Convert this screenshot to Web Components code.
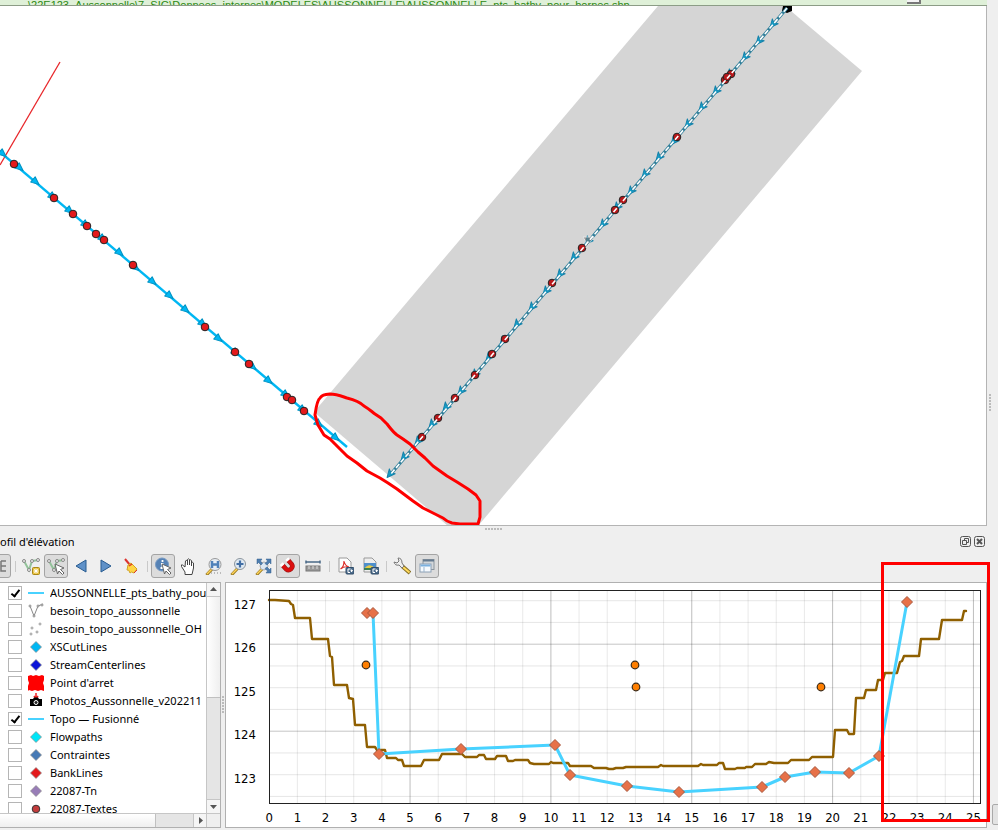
<!DOCTYPE html>
<html lang="fr">
<head>
<meta charset="utf-8">
<title>Profil d'élévation</title>
<style>
html, body { height: 100%; margin: 0; }
body { background: #efefef; color: #000; font: 11px/18px "Noto Sans", "Open Sans", sans-serif; overflow: hidden; }
</style>
</head>
<body>
<gis-app></gis-app>
<script>
function define(name, html, setup) {
  const template = document.createElement('template');
  template.innerHTML = html;
  customElements.define(name, class extends HTMLElement {
    constructor() {
      super();
      this.attachShadow({ mode: 'open' }).append(template.content.cloneNode(true));
    }
    connectedCallback() {
      if (setup && !this.ready) { this.ready = true; setup(this, this.shadowRoot); }
    }
  });
}

/* Message bar above the map */
define('message-bar', `
<style>
:host { display: flex; justify-content: space-between; align-items: flex-start; height: 5px; overflow: hidden; background: #dff0d8; border-bottom: 1px solid #8c9c86; color: #2b8a12; padding: 0 66px 0 28px; }
span { font: 11px/10px "Liberation Sans", sans-serif; white-space: nowrap; }
button { align-self: flex-end; width: 14px; height: 12px; margin: 0 0 1px; padding: 0; border: solid #777; border-width: 0 2px 2px 0; background: #f4f4f4; }
</style>
<span><slot></slot></span><button aria-label="Fermer le message"></button>`);

/* Map canvas */
const cutArrows = Array.from({ length: 21 }, (_, n) =>
  `<use href="#arrow" transform="translate(${Math.round(3 + 16.65 * n)} ${Math.round(154 + 14.2 * n)}) rotate(40)"/>`).join('');
const profileArrows = Array.from({ length: 28 }, (_, n) =>
  `<use href="#barb" transform="translate(${Math.round(773 - 14.2 * n)} ${Math.round(24 + 16.67 * n)}) rotate(130)"/>`).join('');
const dots = list => list.map(([x, y]) => `<circle cx="${x}" cy="${y}" r="3.8"/>`).join('');
const cutDots = dots([[14,164],[54,198],[73,214],[87,226],[96,234],[104,240],[133,265],[205,327],[235,352],[249,364],[287,397],[292,400],[304,411]]);
const profileDots = dots([[731,74],[725,80],[727,77],[677,137],[623,200],[615,210],[582,248],[552,283],[505,339],[492,354],[475,375],[455,398],[438,418],[422,437]]);
define('map-canvas', `
<style>
:host { display: block; overflow: hidden; background: #fff; border: solid #b4b4b4; border-width: 0 1px 1px 0; min-height: 0; }
svg { display: block; width: 100%; height: 100%; }
</style>
<svg viewBox="0 6 986 519" preserveAspectRatio="xMinYMin slice" role="img" aria-label="Carte">
<defs>
<path id="arrow" d="M4 0L-4 -3.500V3.500Z" fill="#00b7f3" stroke="#0092c2" stroke-linejoin="round"/>
<path id="barb" d="M4.500 0L-3.500 -3.800L-1.500 0L-3.500 3.800Z" fill="#159bc5" stroke="#1683aa" stroke-linejoin="round"/>
</defs>
<path d="M658 6H785L862 71L478 526H448L314 412Z" fill="#d5d5d5"/>
<path d="M60 62L0 165" stroke="#e8262a" stroke-width="1.3"/>
<path d="M0 152L347 447" stroke="#00b7f3" stroke-width="2.4"/>
${cutArrows}
<g fill="#e31a1c" stroke="#232323">${cutDots}</g>
<path d="M783 6H792V11L787 13L782 11Z"/>
<path d="M787 8L390 475" stroke="#32809b" stroke-width="3.2"/>
${profileArrows}
<g fill="#b8171a" stroke="#222">${profileDots}</g>
<path d="M594 237L583 237L586 242L586 248Z" fill="#777" stroke="#eee" stroke-linejoin="round" opacity=".65"/>
<path d="M787 8L390 475" stroke="#fff" stroke-width="1.6" stroke-dasharray="5 2.3"/>
<path d="M315 415C316 408 317 400 320 398C322 395 324 394.500 330 394C336 394 341 396 347 398C355 400 360 402 364 406C369 409 371 411 375 414L381 418L387 424C391 429 393 432 397 435L403 439L410 444L418 452L425 458L433 466L440 471L447 476L457 482L468 489L476 495L480 501V517L478 524H467L460 524L452 523Q446 521 443 518L433 513L423 508L413 501L405 495L397 489L388 483L380 478L367 471L357 463L347 456L337 446L330 439L324 435L318 425Z" fill="none" stroke="#fe0000" stroke-width="3" stroke-linejoin="round"/>
</svg>`);

/* Dotted splitter grip */
define('split-grip', `
<style>
:host { display: flex; align-items: center; justify-content: center; }
i { width: 18px; height: 3px; background: radial-gradient(circle at 1px 1px, #bbb 1px, transparent 1px) 0 0 / 3px 3px; }
:host([vertical]) i { width: 3px; height: 18px; }
</style><i></i>`);

/* Toolbar button */
const wand = '<path d="M9 11L2.500 18" stroke="#9a7b20" stroke-width="3"/><path d="M8 12L3 17" stroke="#ffd45a" stroke-width="1.500"/>';
const route = '<path d="M2 4L7 13L10 4L17 3" fill="none" stroke="#93c29a" stroke-width="2"/><g fill="#eee" stroke="#888"><circle cx="2" cy="4" r="1.500"/><circle cx="7" cy="13" r="1.500"/><circle cx="10" cy="4" r="1.500"/><circle cx="16" cy="3" r="1.500"/></g>';
const pointer = '<path d="M8 7L17 11L13.500 12.500L17 16L15.500 17.500L12 14L10.500 17Z" fill="#fff" stroke="#666"/>';
const badge = '<rect x="10" y="10.500" width="8" height="6.500" rx="1" fill="#4e6d8c" stroke="#304d69"/><path d="M14.500 12H12V15.500H14M15.500 12.500V15M14.500 13.700H17" stroke="#fff" fill="none"/>';
const icons = {
  tree: '<path d="M11 4H16M13 9H16M13 14H16M11 4V14H13M11 9H13" stroke="#777" fill="none" stroke-width="1.500"/>',
  add: route + '<rect x="10.500" y="10.500" width="7" height="7" rx="1" fill="#e8c13c" stroke="#a98616"/><path d="M14 11.500V16.500M11.500 14H16.500M12.300 12.300L15.700 15.700M15.700 12.300L12.300 15.700" stroke="#fff"/>',
  pick: route + pointer,
  prev: '<path d="M14 3V15L4 9Z" fill="#5f91c8" stroke="#285c91" stroke-linejoin="round"/>',
  next: '<path d="M4 3V15L14 9Z" fill="#5f91c8" stroke="#285c91" stroke-linejoin="round"/>',
  clear: '<path d="M3 2L8 8" stroke="#dc332f" stroke-width="2"/><path d="M6 8L9 6L15 12L12 16Q9 14 8 16Q7 12 5 13Z" fill="#ffd543" stroke="#d2a423"/><path d="M7 9L10 7" stroke="#e23a28" stroke-width="1.500"/><path d="M12 16L15 13" stroke="#dc332f"/>',
  identify: '<circle cx="8" cy="7.500" r="6.500" fill="#5682b5" stroke="#7598c2"/><path d="M8.500 3V5M7 7H8.500V11M6.500 11H10.500" stroke="#fff" stroke-width="1.800" fill="none"/>' + pointer,
  pan: '<path d="M6 10L3.500 8Q2 7 2.500 9.500L6 15V17.500H13L14.500 11V6Q13 4 12.500 6V9V3.500Q11 2 10.500 3.500V8V2.500Q9 1 8.500 2.500V8V4Q7 2.500 6.500 4Z" fill="#fff" stroke="#444"/>',
  axis: wand + '<circle cx="11" cy="7.500" r="6" fill="#e6edf4" stroke="#999"/><path d="M7 7.500H15M8 4V11M14 4V11" stroke="#4f81b9" stroke-width="2.500"/><path d="M7 16H17" stroke="#bbb" stroke-dasharray="1 2" stroke-width="2"/>',
  zoom: wand + '<circle cx="11" cy="7" r="5.500" fill="#dfe9f2" stroke="#8c959d"/><path d="M11 3.500V10.500M7.500 7H14.500" stroke="#426fa5" stroke-width="2.200"/>',
  full: wand + '<circle cx="10" cy="9" r="4" fill="#dde8f3" stroke="#aaa"/><path d="M3 2H8L6.500 4L8.500 6.500L7 8L4.500 5.500L3 7ZM17 2H12L13.500 4L11 6.500L13 8L15.500 5.500L17 7ZM17 16H12L13.500 14L11 11.500L13 10L15.500 12.500L17 11Z" fill="#4f7eaf" stroke="#315e8c" stroke-width=".5"/>',
  snap: '<g transform="rotate(-42 9 9)" fill="none"><path d="M5.500 5V10A3.800 3.800 0 0 0 13 10V5" stroke="#9d1717" stroke-width="4.600"/><path d="M5.500 5V10A3.800 3.800 0 0 0 13 10V5" stroke="#dc0f0f" stroke-width="3.400"/><path d="M3.500 4H7.500M11 4H15" stroke="#fff" stroke-width="2.500"/></g>',
  measure: '<path d="M2 5H16M2 3.500V6.500M16 3.500V6.500" stroke="#496987" stroke-width="1.500"/><rect x="2" y="9" width="14" height="5" fill="#999" stroke="#777"/><path d="M5 9V12M9 9V12M13 9V12" stroke="#ddd"/>',
  pdf: '<path d="M3 1H11L15 5V15H3Z" fill="#fff" stroke="#999"/><path d="M4.500 12Q8 10 8 4Q9 9 13 10Q8 9 4.500 12" stroke="#dc302c" fill="none" stroke-width="1.200"/>' + badge,
  image: '<path d="M3 1H11L15 5V15H3Z" fill="#eee" stroke="#999"/><rect x="3" y="6" width="12" height="7" fill="#4f8fcb"/><path d="M3 12Q8 5 14 11V13H3Z" fill="#e6cc45"/><path d="M3 12H14" stroke="#397f51" stroke-width="2"/>' + badge,
  options: '<path d="M9 9L17 16" stroke="#846d21" stroke-width="4"/><path d="M10 10L16.500 15.500" stroke="#ffda5d" stroke-width="2"/><path d="M5 1Q9 1 9 6L11 9L9 11L6 8Q2 9 1 5L4 6L6 4Z" fill="#eee" stroke="#777"/>',
  dock: '<rect x="5" y="2.500" width="11" height="10" fill="#d3d7da" stroke="#8b959e"/><path d="M5 3.500H16" stroke="#657a90" stroke-width="2"/><rect x="2" y="7" width="11" height="8" fill="#f6fafe" stroke="#8ca0b5"/><path d="M2.500 8.500H12.500" stroke="#7cb1df" stroke-width="2"/><path d="M6 10V15" stroke="#9bb4cc"/>'
};
define('tool-button', `
<style>
:host { display: block; width: 25px; height: 24px; flex: none; }
button { display: grid; place-items: center; box-sizing: border-box; width: 24px; height: 24px; padding: 0; border: 1px solid transparent; border-radius: 3px; background: none; }
:host([on]) button { background: #dcdcdc; border-color: #a4a4a4; }
svg { width: 18px; height: 18px; }
</style><button><svg viewBox="0 0 18 18"></svg></button>`, (el, root) => {
  root.querySelector('svg').innerHTML = icons[el.getAttribute('icon')];
  root.querySelector('button').setAttribute('aria-label', el.getAttribute('label'));
  root.querySelector('button').setAttribute('aria-pressed', el.hasAttribute('on'));
});

/* Layer tree row */
const diamond = c => `<path d="M8 2.500L13.500 8L8 13.500L2.500 8Z" fill="${c}" stroke="#888" stroke-width=".7"/>`;
const symbols = {
  line: '<path d="M0 8H16" stroke="#48d2ff" stroke-width="2"/>',
  poly: '<path d="M2 3L6 13L10 3L15 1" fill="none" stroke="#888"/><g fill="#fff" stroke="#888"><circle cx="2" cy="3" r="1"/><circle cx="6" cy="13" r="1"/><circle cx="10" cy="3" r="1"/><circle cx="14" cy="2" r="1"/></g>',
  points: '<g fill="#fff" stroke="#999"><circle cx="4" cy="7" r="1"/><circle cx="12" cy="3" r="1"/><circle cx="3" cy="13" r="1"/><circle cx="9" cy="11" r="1"/></g>',
  stop: '<path d="M0 1L3 0L5 1L8 0L11 1L14 0L16 1V5L15 8L16 11V16L13 15L10 16L7 15L4 16L1 15L0 16V11L1 8L0 5Z" fill="#f00"/>',
  photo: '<path d="M8 0V6M6 3L8 6L10 3" stroke="#e22" stroke-width="1.500" fill="none"/><path d="M2 6H5L6 4.500H10L11 6H14V13H2Z"/><circle cx="8" cy="9.500" r="2" stroke="#fff" fill="#222"/>',
  dot: '<circle cx="8" cy="8" r="3.800" fill="#c33c3c" stroke="#333"/>'
};
define('layer-row', `
<style>
:host { display: block; height: 18px; flex: none; }
label { display: grid; grid-template-columns: 14px 16px minmax(0, 1fr); column-gap: 6px; align-items: center; height: 18px; white-space: nowrap; }
span { line-height: 18px; overflow: hidden; }
input { appearance: none; box-sizing: border-box; width: 14px; height: 14px; margin: 0; border: 1px solid #b5b5b5; background: #fff; display: grid; place-items: center; }
input:checked::after { content: ""; box-sizing: border-box; width: 5px; height: 9px; border: solid #000; border-width: 0 2px 2px 0; transform: rotate(38deg); margin-bottom: 2px; }
svg { width: 16px; height: 16px; overflow: visible; }
</style><label><input type="checkbox"><svg viewBox="0 0 16 16"></svg><span><slot></slot></span></label>`, (el, root) => {
  const s = el.getAttribute('symbol');
  root.querySelector('svg').innerHTML = symbols[s] || diamond(s);
  root.querySelector('input').checked = el.hasAttribute('checked');
});

/* Layer list with its scroll bars */
define('layer-tree', `
<style>
:host { display: grid; grid-template: 1fr 14px / 1fr 14px; border: solid #b0b0b0; border-width: 1px 1px 1px 0; background: #fff; min-height: 0; }
.rows { overflow: hidden; min-width: 0; min-height: 0; padding: 1px 0 0 8px; display: flex; flex-direction: column; }
.v, .h { display: flex; background: #e5e5e5; min-height: 0; }
.v { flex-direction: column; justify-content: space-between; border-left: 1px solid #c6c6c6; }
.h { justify-content: space-between; border-top: 1px solid #c6c6c6; }
.v div { display: flex; flex-direction: column; flex: 0 0 50%; }
.thumb { flex: 1; background: linear-gradient(90deg, #fff, #efefef); border-bottom: 1px solid #c0c0c0; }
.h .thumb { flex: 0 1 75%; background: linear-gradient(#fff, #efefef); border: 0; border-right: 1px solid #c0c0c0; }
button { flex: none; width: 13px; height: 14px; padding: 0; border: 0; border-bottom: 1px solid #c6c6c6; background: #f5f5f5; display: grid; place-items: center; }
.down { border: 0; border-top: 1px solid #c6c6c6; }
.h button { height: 13px; border: 0; border-left: 1px solid #c6c6c6; }
svg { width: 7px; height: 7px; fill: #555; }
.corner { background: #efefef; border: solid #c6c6c6; border-width: 1px 0 0 1px; }
</style>
<div class="rows"><slot></slot></div>
<div class="v"><div><button aria-label="Haut"><svg viewBox="0 0 7 7"><path d="M0 5L3.500 1L7 5Z"/></svg></button><i class="thumb"></i></div><button class="down" aria-label="Bas"><svg viewBox="0 0 7 7"><path d="M0 2L3.500 6L7 2Z"/></svg></button></div>
<div class="h"><i class="thumb"></i><button aria-label="Droite"><svg viewBox="0 0 7 7"><path d="M2 0L6 3.500L2 7Z"/></svg></button></div>
<div class="corner"></div>`);

/* Elevation chart */
const X = v => 269.2 + 28.17 * v;
const Y = v => 600.7 + 43.5 * (127 - v);
let grid = '', axis = '';
for (let i = 0; i <= 25; i++) {
  if (i) grid += `<path d="M${X(i)} 591V803" stroke="#000" opacity="${i % 5 ? .08 : .25}"/>`;
  axis += `<text x="${X(i)}" y="822" text-anchor="middle">${i}</text>`;
}
for (let v = 127; v >= 122.5; v -= .5)
  grid += `<path d="M270 ${Y(v)}H980" stroke="#000" opacity="${v === 126 || v === 124 ? .22 : .09}"/>`;
for (let v = 127; v >= 123; v--) axis += `<text x="256" y="${Math.round(Y(v) + 8)}" text-anchor="end">${v}</text>`;
const survey = [[373,613],[379,754],[461,749],[555,745],[570,775],[627,786],[679,792],[762,787],[785,777],[815,772],[849,773],[879,756],[907,602]];
const markers = [[367,613], ...survey].map(([x, y]) => `<path d="M${x} ${y - 5.5}L${x + 5.5} ${y}L${x} ${y + 5.5}L${x - 5.5} ${y}Z"/>`).join('');
const terrain = '269,600 275,600 289,601 291,604 293,605 295,618 310,618 312,639 328,639 330,656 332,657 334,685 347,685 349,698 353,699 355,725 365,725 367,747 375,747 377,750 385,750 387,758 396,758 398,760 402,760 404,766 421,766 424,760 439,760 442,754 462,754 465,757 477,757 479,755 484,755 486,759 495,759 497,756 506,756 508,761 513,761 515,760 528,760 530,763 534,764 549,764 551,762 553,763 568,763 570,766 591,766 594,768 606,768 609,769 613,769 616,768 623,768 626,767 658,767 661,765 663,766 698,766 701,764 703,765 717,765 719,763 723,763 725,769 735,769 737,768 745,768 746,767 752,767 755,764 766,764 769,762 774,763 788,763 791,760 809,760 812,757 833,757 835,730 847,730 849,734 854,734 856,698 864,698 866,690 876,690 878,680 883,680 885,673 897,673 900,662 902,661 904,656 919,656 921,639 939,639 942,620 962,620 964,611 966,611';
define('elevation-chart', `
<style>
:host { display: block; background: #fff; border: 1px solid #b0b0b0; min-width: 0; }
svg { display: block; width: 100%; height: 100%; }
text { font: 13px "DejaVu Sans Condensed", "Noto Sans", sans-serif; fill: #000; }
</style>
<svg viewBox="226 583 760 244" preserveAspectRatio="xMinYMin meet" role="img" aria-label="Profil d'élévation">
${grid}
<polyline points="${terrain}" fill="none" stroke="#8f5f00" stroke-width="2.4" stroke-linejoin="round" stroke-linecap="round"/>
<polyline points="${survey.join(' ')}" fill="none" stroke="#48d2ff" stroke-width="3" stroke-linejoin="round"/>
<g fill="#e77148" stroke="#a9573c">${markers}</g>
<g fill="#ff7f00" stroke="#3a2a18" stroke-width="1.2"><circle cx="366" cy="665" r="3.800"/><circle cx="635" cy="665" r="3.800"/><circle cx="636" cy="687" r="3.800"/><circle cx="821" cy="687" r="3.800"/></g>
<rect x="269.500" y="590.500" width="711" height="213" fill="none" stroke="#222"/>
${axis}
</svg>`);

/* Elevation profile dock */
define('profile-dock', `
<style>
:host { display: block; position: relative; }
header { display: flex; align-items: center; justify-content: space-between; height: 19px; padding-right: 2px; }
h1 { margin: 0; font: inherit; line-height: 18px; }
header div { display: flex; gap: 3px; }
header button { width: 11px; height: 11px; padding: 0; border: 0; background: none; }
header svg { display: block; width: 11px; height: 11px; fill: none; stroke: #555; }
nav { display: flex; align-items: center; height: 24px; padding: 3px 0 4px; }
.first { margin-left: -13px; }
hr { width: 1px; height: 11px; margin: 0 3px; border: 0; background: #c9c9c9; flex: none; }
.body { display: grid; grid-template-columns: 221px 4px 1fr; height: 246px; }
.mark { position: absolute; top: 30px; right: -3px; width: 103px; height: 254px; border: 3px solid #f00; pointer-events: none; }
</style>
<header><h1>ofil d'élévation</h1><div>
<button aria-label="Détacher"><svg viewBox="0 0 11 11"><rect x=".5" y=".5" width="10" height="10" rx="2"/><path d="M2.500 4.500H6.500V8.500H2.500ZM4.500 4.500V2.500H8.500V6.500H6.500"/></svg></button>
<button aria-label="Fermer"><svg viewBox="0 0 11 11"><rect x=".5" y=".5" width="10" height="10" rx="2"/><path d="M3 3L8 8M8 3L3 8" stroke-width="2"/></svg></button></div></header>
<nav>
<tool-button class="first" icon="tree" label="Couches" on></tool-button><hr>
<tool-button icon="add" label="Ajouter"></tool-button>
<tool-button icon="pick" label="Capturer la courbe" on></tool-button>
<tool-button icon="prev" label="Décaler à gauche"></tool-button>
<tool-button icon="next" label="Décaler à droite"></tool-button>
<tool-button icon="clear" label="Effacer"></tool-button><hr>
<tool-button icon="identify" label="Identifier" on></tool-button>
<tool-button icon="pan" label="Déplacer"></tool-button>
<tool-button icon="axis" label="Zoom sur l'axe X"></tool-button>
<tool-button icon="zoom" label="Zoom"></tool-button>
<tool-button icon="full" label="Zoom complet"></tool-button>
<tool-button icon="snap" label="Accrochage" on></tool-button>
<tool-button icon="measure" label="Mesurer"></tool-button><hr>
<tool-button icon="pdf" label="Exporter en PDF"></tool-button>
<tool-button icon="image" label="Exporter en image"></tool-button><hr>
<tool-button icon="options" label="Options"></tool-button>
<tool-button icon="dock" label="Ancrer" on></tool-button>
</nav>
<div class="body">
<layer-tree>
<layer-row symbol="line" checked>AUSSONNELLE_pts_bathy_pour</layer-row>
<layer-row symbol="poly">besoin_topo_aussonnelle</layer-row>
<layer-row symbol="points">besoin_topo_aussonnelle_OH</layer-row>
<layer-row symbol="#00b7f3">XSCutLines</layer-row>
<layer-row symbol="#0a14d8">StreamCenterlines</layer-row>
<layer-row symbol="stop">Point d'arret</layer-row>
<layer-row symbol="photo">Photos_Aussonnelle_v202211</layer-row>
<layer-row symbol="line" checked>Topo — Fusionné</layer-row>
<layer-row symbol="#00e5f7">Flowpaths</layer-row>
<layer-row symbol="#477ab5">Contraintes</layer-row>
<layer-row symbol="#e31a1c">BankLines</layer-row>
<layer-row symbol="#987db7">22087-Tn</layer-row>
<layer-row symbol="dot">22087-Textes</layer-row>
</layer-tree>
<split-grip vertical></split-grip>
<elevation-chart></elevation-chart>
</div>
<div class="mark"></div>`);

/* Window */
define('gis-app', `
<style>
:host { display: grid; grid-template-columns: 1fr 11px; height: 100vh; overflow: hidden; }
main { display: grid; grid-template-rows: auto minmax(0, 1fr) 6px auto; padding-bottom: 2px; min-width: 0; }
aside { display: flex; flex-direction: column; justify-content: space-between; overflow: hidden; padding: 394px 0 5px; box-sizing: border-box; }
aside split-grip { padding-right: 4px; }
aside button { align-self: flex-end; flex: none; width: 14px; height: 21px; margin-right: -8px; padding: 0; border: 1px solid #aaa; border-radius: 2px; background: #e3e3e3; }
</style>
<main>
<message-bar>\\22E123_Aussonnelle\\7_SIG\\Donnees_internes\\MODELES\\AUSSONNELLE\\AUSSONNELLE_pts_bathy_pour_bornes.shp</message-bar>
<map-canvas></map-canvas>
<split-grip></split-grip>
<profile-dock></profile-dock>
</main>
<aside><split-grip vertical></split-grip><button aria-label="Panneau"></button></aside>`);
</script>
</body>
</html>
